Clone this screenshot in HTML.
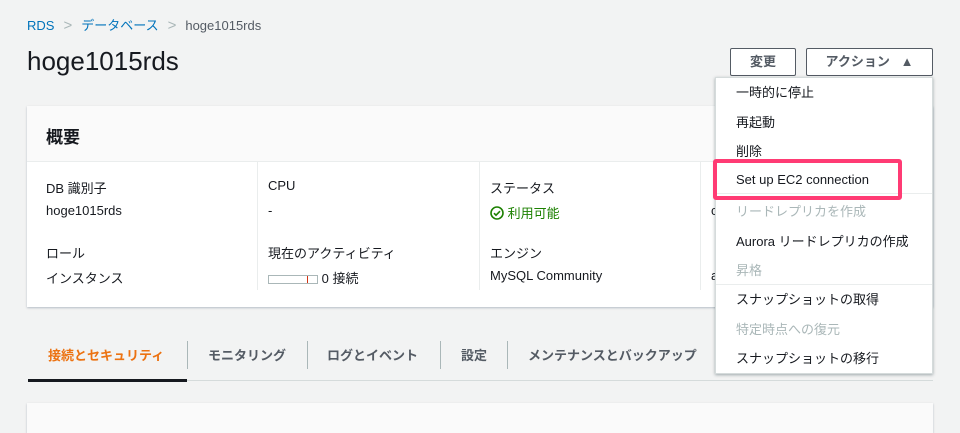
<!DOCTYPE html>
<html><head><meta charset="utf-8"><style>
*{margin:0;padding:0;box-sizing:border-box}
body{width:960px;height:421px;overflow:hidden;background:#f2f3f3;font-family:"Liberation Sans","Noto Sans CJK JP",sans-serif;color:#16191f;position:relative;font-size:13px}
.a{position:absolute;white-space:nowrap}
.bc{top:15px;left:27px;font-size:13px;color:#545b64}
.bc .l{color:#0073bb}
.bc .s{color:#aab7b8;margin:0 9px;font-size:15px}
.card{position:absolute;left:27px;top:106px;width:906px;height:201px;background:#fff;box-shadow:0 1px 2px rgba(0,32,64,.25)}
.hd{height:56px;background:#fafafa;border-bottom:1px solid #eaeded}
.btn{position:absolute;top:48px;height:28px;border:1px solid #545b64;border-radius:2px;background:#fff;font-weight:bold;color:#545b64;font-size:13px;text-align:center;line-height:26px}
.dd{position:absolute;left:715px;top:77px;width:218px;height:297px;background:#fff;box-shadow:0 1px 3px rgba(0,28,36,.35);border:1px solid #d5dbdb}
.dd div{position:absolute;left:20px;font-size:13px;white-space:nowrap}
.g{color:#aab7b8}
.vs{position:absolute;width:1px;background:#eaeded;top:56px;height:128px}
.tab{position:absolute;top:345px;font-size:13px;font-weight:bold;color:#545b64}
.ts{position:absolute;top:341px;width:1px;height:28px;background:#aab7b8}
</style></head><body>
<div class="a bc"><span class="l">RDS</span><span class="s">&gt;</span><span class="l">データベース</span><span class="s">&gt;</span>hoge1015rds</div>
<div class="a" style="left:27px;top:46px;font-size:26px;color:#16191f">hoge1015rds</div>
<div class="btn" style="left:730px;width:66px">変更</div>
<div class="btn" style="left:806px;width:127px">アクション&nbsp;&nbsp;&nbsp;▲</div>
<div class="card">
<div class="hd"><div class="a" style="left:19px;top:17px;font-size:17px;font-weight:bold">概要</div></div>
<div class="vs" style="left:230px"></div><div class="vs" style="left:452px"></div><div class="vs" style="left:673px"></div>
<div class="a" style="left:19px;top:72px">DB 識別子</div>
<div class="a" style="left:19px;top:97px">hoge1015rds</div>
<div class="a" style="left:19px;top:137px">ロール</div>
<div class="a" style="left:19px;top:162px">インスタンス</div>
<div class="a" style="left:241px;top:72px">CPU</div>
<div class="a" style="left:241px;top:97px">-</div>
<div class="a" style="left:241px;top:137px">現在のアクティビティ</div>
<div class="a" style="left:241px;top:162px"><span style="display:inline-block;width:50px;height:9px;border:1px solid #aab7b8;vertical-align:middle;position:relative"><span style="position:absolute;left:38px;top:0;width:1px;height:7px;background:#d13212"></span></span> 0 接続</div>
<div class="a" style="left:463px;top:72px">ステータス</div>
<div class="a" style="left:463px;top:97px;color:#1d8102"><svg width="14" height="14" viewBox="0 0 14 14" style="vertical-align:-2px"><circle cx="7" cy="7" r="6" fill="none" stroke="#1d8102" stroke-width="1.6"/><path d="M4 7.2l2 2 4-4" fill="none" stroke="#1d8102" stroke-width="1.6"/></svg> 利用可能</div>
<div class="a" style="left:463px;top:137px">エンジン</div>
<div class="a" style="left:463px;top:162px">MySQL Community</div>
<div class="a" style="left:684px;top:97px">c</div>
<div class="a" style="left:684px;top:162px">a</div>
</div>
<div class="tab" style="left:48px;color:#ec7211">接続とセキュリティ</div>
<div class="ts" style="left:187px"></div>
<div class="tab" style="left:208px">モニタリング</div>
<div class="ts" style="left:307px"></div>
<div class="tab" style="left:327px">ログとイベント</div>
<div class="ts" style="left:440px"></div>
<div class="tab" style="left:461px">設定</div>
<div class="ts" style="left:507px"></div>
<div class="tab" style="left:528px">メンテナンスとバックアップ</div>
<div class="a" style="left:28px;top:380px;width:905px;height:1px;background:#d5dbdb"></div>
<div class="a" style="left:28px;top:379px;width:159px;height:3px;background:#16191f"></div>
<div class="a" style="left:27px;top:403px;width:906px;height:30px;background:#fafafa;box-shadow:0 1px 2px rgba(0,32,64,.25)"></div>
<div class="dd">
<div style="top:4px">一時的に停止</div>
<div style="top:34px">再起動</div>
<div style="top:63px">削除</div>
<div style="top:94px">Set up EC2 connection</div>
<div style="left:0;top:115px;width:216px;height:1px;background:#eaeded"></div>
<div class="g" style="top:123px">リードレプリカを作成</div>
<div style="top:153px">Aurora リードレプリカの作成</div>
<div class="g" style="top:182px">昇格</div>
<div style="left:0;top:206px;width:216px;height:1px;background:#eaeded"></div>
<div style="top:211px">スナップショットの取得</div>
<div class="g" style="top:241px">特定時点への復元</div>
<div style="top:270px">スナップショットの移行</div>
</div>
<div class="a" style="left:713px;top:159px;width:189px;height:41px;border:4px solid #ff3b74;border-radius:3px"></div>
</body></html>
